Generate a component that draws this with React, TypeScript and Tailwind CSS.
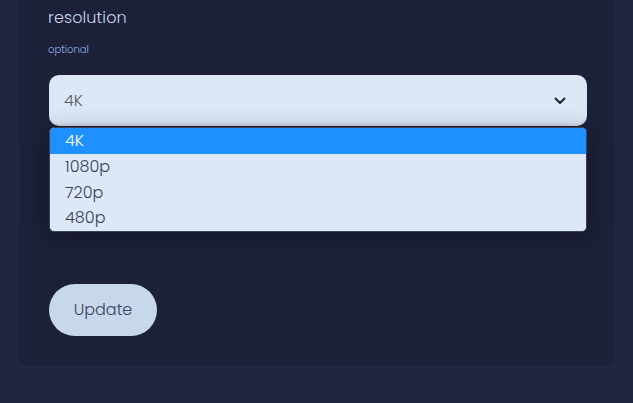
import React from "react";

export default function App() {
  const options = ["4K", "1080p", "720p", "480p"];
  return (
    <div
      className="w-[633px] h-[403px] bg-[#21253f] overflow-hidden"
      style={{ fontFamily: "Poppins, Inter, 'Noto Sans', sans-serif" }}
    >
      <div className="mx-[19px] h-[366px] rounded-b-[10px] bg-[#1c2039] pl-[29px] pr-[27px] pt-[6px]">
        <div className="text-[16px] leading-[24px] font-light text-[#c9d6ea] tracking-[0.1px]">
          resolution
        </div>
        <div className="mt-[13px] text-[10px] leading-[14px] text-[#8fb1e4] font-light">
          optional
        </div>
        <div className="relative mt-[18px] ml-[1px]">
          <div className="h-[51px] rounded-[10px] bg-[#dce8f6] flex items-center justify-between pl-[15px] pr-[21px] shadow-[inset_0_-2px_2px_rgba(0,0,0,0.08)]">
            <span className="text-[16px] font-light text-[#555a66]">4K</span>
            <svg width="12" height="8" viewBox="0 0 12 8" fill="none">
              <path
                d="M1.5 1.5 L6 6 L10.5 1.5"
                stroke="#1e2235"
                strokeWidth="2"
                strokeLinecap="round"
                strokeLinejoin="round"
              />
            </svg>
          </div>
          <div className="absolute left-0 right-0 top-[52px] z-10 rounded-[5px] border border-[#3d4150] bg-[#dce8f6] overflow-hidden shadow-[0_4px_24px_rgba(0,0,0,0.3)]">
            {options.map((o, i) => (
              <div
                key={o}
                className={
                  i === 0
                    ? "h-[26px] pl-[15px] flex items-center text-[16px] font-light bg-[#1e90ff] text-white"
                    : "h-[25.7px] pl-[15px] flex items-center text-[16px] font-light text-[#3a3f55]"
                }
              >
                {o}
              </div>
            ))}
          </div>
        </div>
        <button className="mt-[158px] ml-[1px] w-[108px] h-[52px] rounded-full bg-[#c6d8ea] text-[16px] font-light text-[#3d4266] flex items-center justify-center">
          Update
        </button>
      </div>
    </div>
  );
}
